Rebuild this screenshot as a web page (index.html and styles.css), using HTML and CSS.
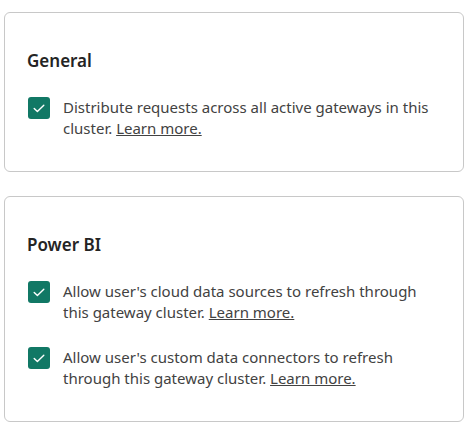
FILE: index.html
```html
<!DOCTYPE html>
<html lang="en">
<head>
    <meta charset="UTF-8">
    <meta name="viewport" content="width=device-width, initial-scale=1.0">
    <title>Gateway cluster settings</title>
    <link rel="stylesheet" href="styles.css">
</head>
<body>
    <div class="page">
        <div class="card">
            <h2>General</h2>
            <div class="option">
                <span class="check">
                    <svg viewBox="0 0 22 22" width="22" height="22"><polyline points="6.2,11.4 9.4,14.6 15.8,8.2"/></svg>
                </span>
                <p>Distribute requests across all active gateways in this cluster. <a href="#">Learn more.</a></p>
            </div>
        </div>

        <div class="card">
            <h2>Power BI</h2>
            <div class="option">
                <span class="check">
                    <svg viewBox="0 0 22 22" width="22" height="22"><polyline points="6.2,11.4 9.4,14.6 15.8,8.2"/></svg>
                </span>
                <p>Allow user's cloud data sources to refresh through this gateway cluster. <a href="#">Learn more.</a></p>
            </div>
            <div class="option">
                <span class="check">
                    <svg viewBox="0 0 22 22" width="22" height="22"><polyline points="6.2,11.4 9.4,14.6 15.8,8.2"/></svg>
                </span>
                <p>Allow user's custom data connectors to refresh through this gateway cluster. <a href="#">Learn more.</a></p>
            </div>
        </div>
    </div>
</body>
</html>
```

FILE: styles.css
```css
body {
    font-family: "Noto Sans", "Open Sans", Arial, sans-serif;
    background-color: #ffffff;
    color: #424242;
    margin: 0;
    padding: 0;
}
.page {
    display: flex;
    flex-direction: column;
    gap: 24px;
    padding: 12px 0 0 4px;
}
.card {
    box-sizing: border-box;
    width: 460px;
    border: 1px solid #c8c8c8;
    border-radius: 6px;
    padding: 36px 22px 32px 22px;
    display: flex;
    flex-direction: column;
    gap: 24px;
}
h2 {
    margin: 0;
    font-size: 17px;
    line-height: 24px;
    font-weight: 600;
    color: #242424;
}
.option {
    display: flex;
    align-items: flex-start;
    gap: 13px;
}
.check {
    flex: none;
    width: 22px;
    height: 22px;
    margin-left: 1px;
    border-radius: 3px;
    background-color: #117865;
    display: flex;
}
.check polyline {
    fill: none;
    stroke: #ffffff;
    stroke-width: 1.4;
    stroke-linecap: round;
    stroke-linejoin: round;
}
.option p {
    margin: 0;
    font-size: 15px;
    line-height: 21px;
}
.option a {
    color: #424242;
    text-decoration: underline;
}
```
